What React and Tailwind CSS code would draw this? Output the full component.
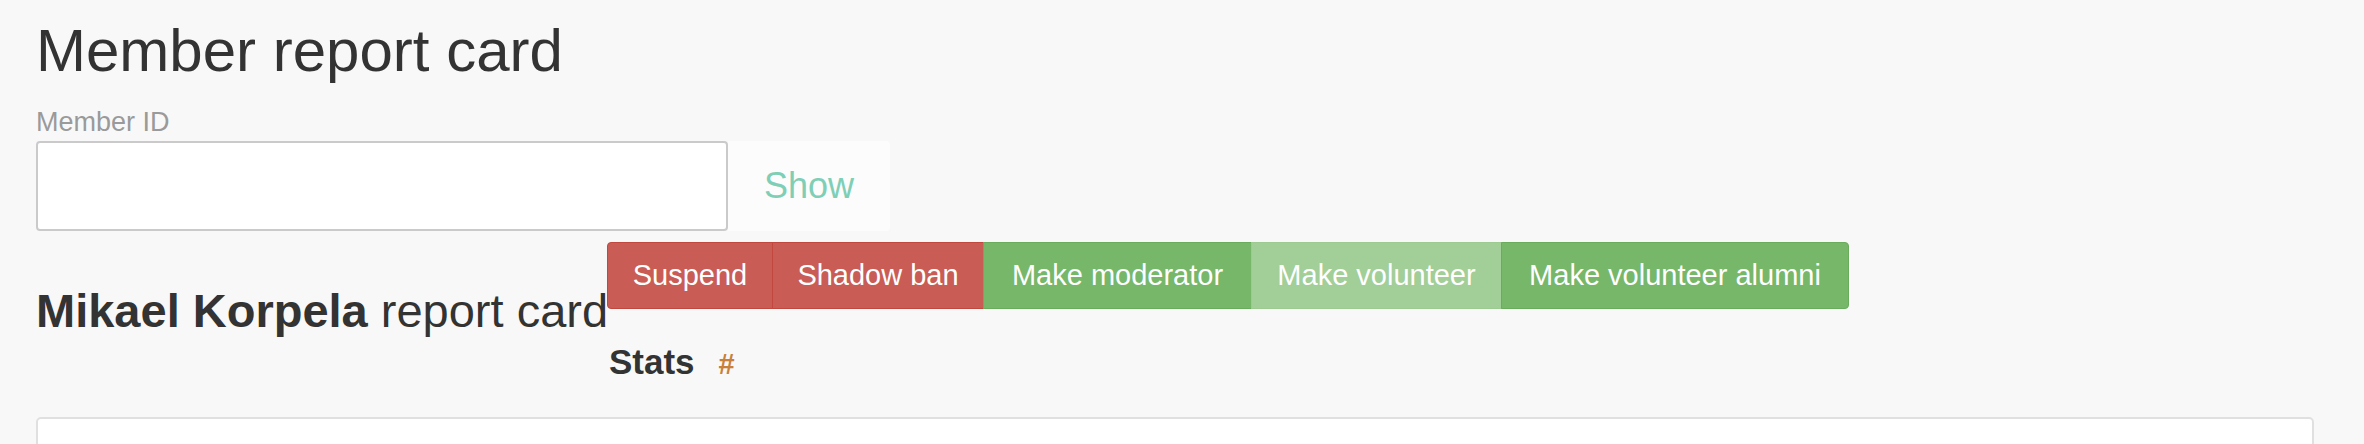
import React, { useState } from "react";

const actions = [
  { label: "Suspend", w: "w-[166px]", tone: "bg-[#c95c54] border-[#c2473f]" },
  { label: "Shadow ban", w: "w-[212px]", tone: "bg-[#c95c54] border-[#c2473f]" },
  { label: "Make moderator", w: "w-[269px]", tone: "bg-[#76b769] border-[#69ad5c]" },
  { label: "Make volunteer", w: "w-[251px]", tone: "bg-[#a2ce98] border-[#9cca91]" },
  { label: "Make volunteer alumni", w: "w-[348px]", tone: "bg-[#76b769] border-[#69ad5c]" },
];

const MemberReportCard = () => {
  const [memberId, setMemberId] = useState("");

  return (
    <div className="h-[444px] overflow-hidden bg-[#f8f8f8] pl-[36px] pr-[50px] text-[#333] font-['Liberation_Sans',Arial,sans-serif]">
      <h1 className="pt-[18px] text-[60px] leading-[66px] font-normal">Member report card</h1>

      <label className="mt-[22px] block text-[27px] leading-[32px] text-[#9a9a9a]">Member ID</label>
      <div className="mt-[3px] flex">
        <input
          type="text"
          value={memberId}
          onChange={(e) => setMemberId(e.target.value)}
          className="h-[90px] w-[692px] rounded-[4px] border-2 border-[#cacaca] bg-white px-4 text-[28px] outline-none"
        />
        <button className="flex h-[90px] w-[162px] items-center justify-center rounded-r-[4px] bg-[#fcfcfc] text-[36px] text-[#7fcfb6]">
          Show
        </button>
      </div>

      <div className="mt-[11px] flex">
        <h2 className="mt-[43px] w-[571px] shrink-0 whitespace-nowrap text-[47px] leading-[52px]">
          <strong className="font-bold">Mikael Korpela</strong> report card
        </h2>
        <div>
          <div className="flex">
            {actions.map((a, i) => (
              <button
                key={a.label}
                className={`flex h-[67px] items-center justify-center border text-[29px] text-white ${a.w} ${a.tone} ${
                  i === 0 ? "rounded-l-[4px]" : "-ml-px"
                } ${i === actions.length - 1 ? "rounded-r-[4px]" : ""}`}
              >
                {a.label}
              </button>
            ))}
          </div>
          <h3 className="mt-[31px] flex items-baseline pl-[2px] text-[35px] leading-[44px] font-bold">
            Stats
            <a href="#stats" className="ml-[24px] text-[29px] font-bold text-[#c8803a]">#</a>
          </h3>
        </div>
      </div>

      <div className="mt-[31px] h-[120px] rounded-[5px] border-2 border-[#e0e0e0] bg-white" />
    </div>
  );
};

export default MemberReportCard;
